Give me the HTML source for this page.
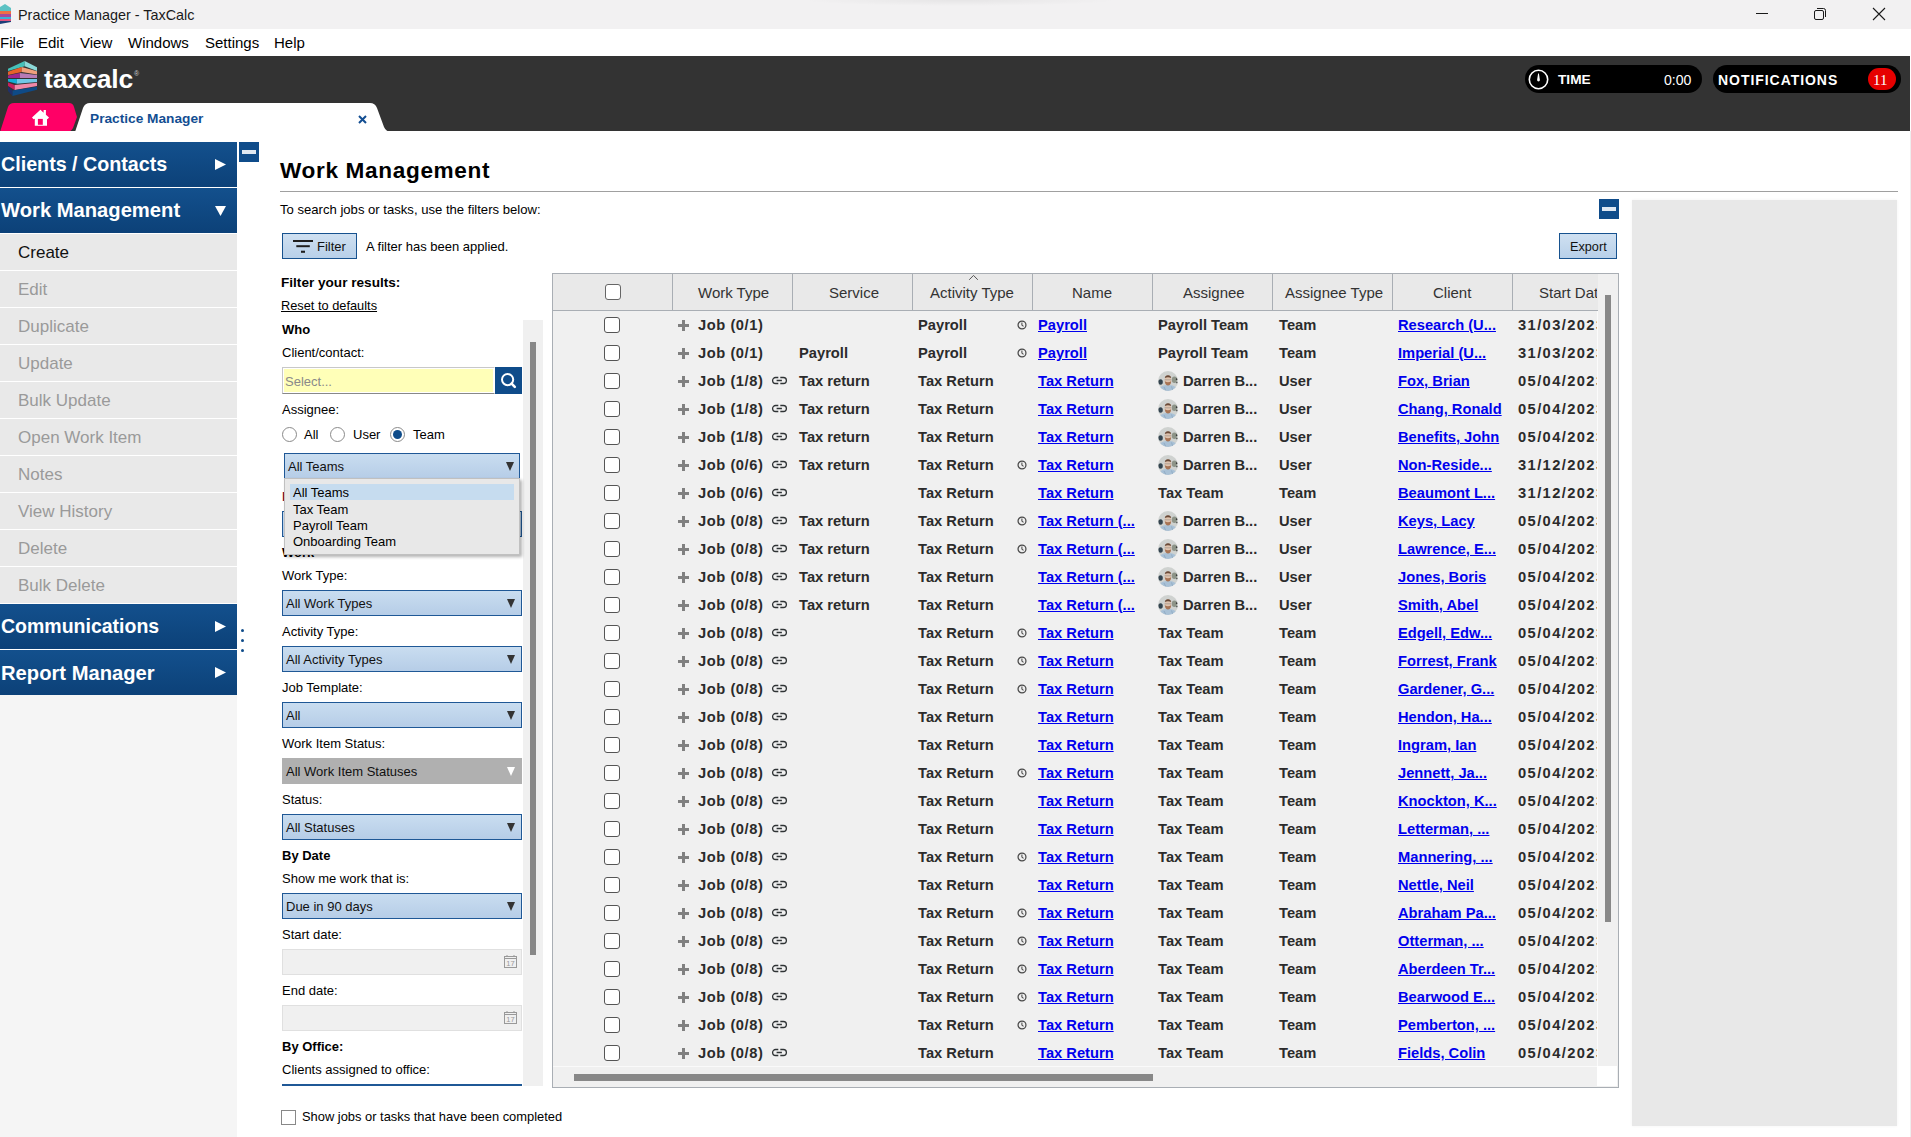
<!DOCTYPE html>
<html><head><meta charset="utf-8"><title>Practice Manager - TaxCalc</title>
<style>
html,body{margin:0;padding:0;width:1911px;height:1137px;overflow:hidden;background:#fff;position:relative}
.t{position:absolute;white-space:pre;line-height:1;font-family:"Liberation Sans",sans-serif}
.r{position:absolute}
</style></head><body>
<div class="r" style="left:0px;top:0px;width:1911px;height:29px;background:#f2f1f2"></div>
<div class="r" style="left:800px;top:0px;width:320px;height:6px;background:radial-gradient(ellipse at 50% 0%, rgba(0,0,0,0.05), rgba(0,0,0,0) 70%)"></div>
<svg class="r" style="left:0;top:4px" width="12" height="20" viewBox="0 0 12 20">
<polygon points="0,3 5,0 11,4 11,7 0,7" fill="#5cc2c4"/>
<rect x="0" y="7" width="11" height="3" fill="#ef7045"/>
<rect x="0" y="10" width="11" height="3" fill="#a8489a"/>
<rect x="0" y="13" width="11" height="2" fill="#39b1d9"/>
<rect x="0" y="15" width="11" height="2" fill="#e1557f"/>
<polygon points="0,17 11,17 11,18 0,20" fill="#1c3f78"/>
</svg>
<div class="t" style="left:18px;top:8px;font-size:14.4px;font-weight:normal;color:#1a1a1a;font-family:'Liberation Sans';">Practice Manager - TaxCalc</div>
<div class="r" style="left:1756px;top:13px;width:12px;height:1px;background:#1a1a1a"></div>
<svg class="r" style="left:1813px;top:7px" width="14" height="14" viewBox="0 0 14 14" fill="none" stroke="#1a1a1a" stroke-width="1">
<rect x="1.5" y="3.5" width="9" height="9" rx="1.5"/><path d="M4 1.5 H10.5 A2 2 0 0 1 12.5 3.5 V10"/></svg>
<svg class="r" style="left:1872px;top:7px" width="14" height="14" viewBox="0 0 14 14" stroke="#1a1a1a" stroke-width="1.1">
<path d="M1 1 L13 13 M13 1 L1 13"/></svg>
<div class="r" style="left:0px;top:29px;width:1911px;height:27px;background:#fff"></div>
<div class="t" style="left:0px;top:35px;font-size:15px;font-weight:normal;color:#000;font-family:'Liberation Sans';">File</div>
<div class="t" style="left:38px;top:35px;font-size:15px;font-weight:normal;color:#000;font-family:'Liberation Sans';">Edit</div>
<div class="t" style="left:80px;top:35px;font-size:15px;font-weight:normal;color:#000;font-family:'Liberation Sans';">View</div>
<div class="t" style="left:128px;top:35px;font-size:15px;font-weight:normal;color:#000;font-family:'Liberation Sans';">Windows</div>
<div class="t" style="left:205px;top:35px;font-size:15px;font-weight:normal;color:#000;font-family:'Liberation Sans';">Settings</div>
<div class="t" style="left:274px;top:35px;font-size:15px;font-weight:normal;color:#000;font-family:'Liberation Sans';">Help</div>
<div class="r" style="left:0px;top:56px;width:1910px;height:76px;background:#333333"></div>
<svg class="r" style="left:8px;top:60px" width="30" height="37" viewBox="0 0 30 37">
<polygon points="0,8.7 16.7,1 16.7,6.3 0,11.1" fill="#45c1b9"/>
<polygon points="16.7,1 29,7.2 29,10.9 16.7,6.3" fill="#8cd9d8"/>
<polygon points="0,11.8 13.7,7 13.7,12 0,15" fill="#e8612a"/>
<polygon points="13.7,7 29,11.3 29,14.6 13.7,12" fill="#f0a07c"/>
<polygon points="0,15.4 11.9,13 11.9,18 0,18.1" fill="#a0278e"/>
<polygon points="11.9,13 29,15 29,18.1 11.9,18" fill="#b87bb5"/>
<polygon points="0,19 8.9,18.9 8.9,23.8 0,21.6" fill="#12afd6"/>
<polygon points="8.9,18.9 29,19 29,22 8.9,23.8" fill="#72c8e6"/>
<polygon points="0,22.6 6.7,25.1 6.7,30.1 0,26" fill="#c8215c"/>
<polygon points="6.7,25.1 29,22.7 29,26 6.7,30.1" fill="#f089a8"/>
<polygon points="0,26.6 4.5,30.6 4.5,36 0,31" fill="#20306a"/>
<polygon points="4.5,30.6 29,26.8 29,29.8 4.5,36" fill="#0e4a86"/>
</svg>
<div class="t" style="left:44px;top:66px;font-size:26.5px;font-weight:bold;color:#fff;font-family:'Liberation Sans';letter-spacing:-0.1px">taxcalc</div>
<div class="t" style="left:134px;top:70px;font-size:7px;color:#ccc">&#174;</div>
<div class="r" style="left:1525px;top:65px;width:177px;height:28px;background:#000;border-radius:14px"></div>
<svg class="r" style="left:1528px;top:69px" width="21" height="21" viewBox="0 0 21 21">
<circle cx="10.5" cy="10.5" r="9.2" fill="none" stroke="#fff" stroke-width="1.6"/>
<path d="M10.1 4.5 L10.9 4.5 L11.9 11 A1.4 1.4 0 1 1 9.1 11 Z" fill="#fff"/></svg>
<div class="t" style="left:1558px;top:73px;font-size:13.7px;font-weight:bold;color:#fff;font-family:'Liberation Sans';">TIME</div>
<div class="t" style="left:1664px;top:73px;font-size:14.1px;font-weight:normal;color:#fff;font-family:'Liberation Sans';">0:00</div>
<div class="r" style="left:1713px;top:65px;width:188px;height:28px;background:#000;border-radius:14px"></div>
<div class="t" style="left:1718px;top:73px;font-size:14px;font-weight:bold;color:#fff;font-family:'Liberation Sans';letter-spacing:0.95px">NOTIFICATIONS</div>
<div class="r" style="left:1868px;top:68px;width:28px;height:22px;background:#e60000;border-radius:11px"></div>
<div class="t" style="left:1873px;top:73px;font-size:15px;font-weight:normal;color:#fff;font-family:'Liberation Serif';">11</div>
<svg class="r" style="left:0;top:103px" width="392" height="29" viewBox="0 0 392 29">
<path d="M0 29 L8 4 Q9.5 0 14 0 L69 0 Q73 0 74 4 L77 14 L73 25 Q71 29 66 29 Z" fill="#ff0066"/>
<path d="M75 29 L83 5 Q85 0 90 0 L370 0 Q375 0 377 5 L384 24 Q386 29 392 29 Z" fill="#fff"/>
</svg>
<svg class="r" style="left:28px;top:106px" width="26" height="24" viewBox="0 0 26 24">
<path d="M12.4 3.8 L15.6 6.7 V3.9 H17.9 V8.8 L21 11.6 L19.6 13.2 L19 12.7 V19.8 H6.8 V12.7 L5.5 13.3 L4 11.5 Z" fill="#fff"/>
<rect x="9.9" y="12.9" width="4.9" height="5.9" fill="#ff0066"/></svg>
<div class="t" style="left:90px;top:112px;font-size:13.7px;font-weight:bold;color:#134e92;font-family:'Liberation Sans';">Practice Manager</div>
<svg class="r" style="left:358px;top:115px" width="9" height="9" viewBox="0 0 9 9" stroke="#134e92" stroke-width="2">
<path d="M1 1 L8 8 M8 1 L1 8"/></svg>
<div class="r" style="left:0px;top:131px;width:1911px;height:1006px;background:#fff"></div>
<div class="r" style="left:0px;top:695px;width:237px;height:442px;background:#f5f5f5"></div>
<div class="r" style="left:1910px;top:131px;width:1px;height:1006px;background:#eeeeee"></div>
<div class="r" style="left:0px;top:142px;width:237px;height:45px;background:linear-gradient(#13508d,#0c4178)"></div>
<div class="t" style="left:1px;top:155px;font-size:19.7px;font-weight:bold;color:#fff;font-family:'Liberation Sans';">Clients / Contacts</div>
<svg class="r" style="left:215px;top:159px" width="11" height="11" viewBox="0 0 11 11"><path d="M0 0 L11 5.5 L0 11 Z" fill="#fff"/></svg>
<div class="r" style="left:0px;top:188px;width:237px;height:45px;background:linear-gradient(#13508d,#0c4178)"></div>
<div class="t" style="left:1px;top:200px;font-size:20.2px;font-weight:bold;color:#fff;font-family:'Liberation Sans';">Work Management</div>
<svg class="r" style="left:215px;top:206px" width="11" height="10" viewBox="0 0 11 10"><path d="M0 0 L11 0 L5.5 10 Z" fill="#fff"/></svg>
<div class="r" style="left:0px;top:234px;width:237px;height:36px;background:#e9e9e9"></div>
<div class="t" style="left:18px;top:244px;font-size:17px;font-weight:normal;color:#111;font-family:'Liberation Sans';">Create</div>
<div class="r" style="left:0px;top:271px;width:237px;height:36px;background:#e9e9e9"></div>
<div class="t" style="left:18px;top:281px;font-size:17px;font-weight:normal;color:#9a9a9a;font-family:'Liberation Sans';">Edit</div>
<div class="r" style="left:0px;top:308px;width:237px;height:36px;background:#e9e9e9"></div>
<div class="t" style="left:18px;top:318px;font-size:17px;font-weight:normal;color:#9a9a9a;font-family:'Liberation Sans';">Duplicate</div>
<div class="r" style="left:0px;top:345px;width:237px;height:36px;background:#e9e9e9"></div>
<div class="t" style="left:18px;top:355px;font-size:17px;font-weight:normal;color:#9a9a9a;font-family:'Liberation Sans';">Update</div>
<div class="r" style="left:0px;top:382px;width:237px;height:36px;background:#e9e9e9"></div>
<div class="t" style="left:18px;top:392px;font-size:17px;font-weight:normal;color:#9a9a9a;font-family:'Liberation Sans';">Bulk Update</div>
<div class="r" style="left:0px;top:419px;width:237px;height:36px;background:#e9e9e9"></div>
<div class="t" style="left:18px;top:429px;font-size:17px;font-weight:normal;color:#9a9a9a;font-family:'Liberation Sans';">Open Work Item</div>
<div class="r" style="left:0px;top:456px;width:237px;height:36px;background:#e9e9e9"></div>
<div class="t" style="left:18px;top:466px;font-size:17px;font-weight:normal;color:#9a9a9a;font-family:'Liberation Sans';">Notes</div>
<div class="r" style="left:0px;top:493px;width:237px;height:36px;background:#e9e9e9"></div>
<div class="t" style="left:18px;top:503px;font-size:17px;font-weight:normal;color:#9a9a9a;font-family:'Liberation Sans';">View History</div>
<div class="r" style="left:0px;top:530px;width:237px;height:36px;background:#e9e9e9"></div>
<div class="t" style="left:18px;top:540px;font-size:17px;font-weight:normal;color:#9a9a9a;font-family:'Liberation Sans';">Delete</div>
<div class="r" style="left:0px;top:567px;width:237px;height:36px;background:#e9e9e9"></div>
<div class="t" style="left:18px;top:577px;font-size:17px;font-weight:normal;color:#9a9a9a;font-family:'Liberation Sans';">Bulk Delete</div>
<div class="r" style="left:0px;top:604px;width:237px;height:45px;background:linear-gradient(#13508d,#0c4178)"></div>
<div class="t" style="left:1px;top:617px;font-size:19.5px;font-weight:bold;color:#fff;font-family:'Liberation Sans';">Communications</div>
<svg class="r" style="left:215px;top:621px" width="11" height="11" viewBox="0 0 11 11"><path d="M0 0 L11 5.5 L0 11 Z" fill="#fff"/></svg>
<div class="r" style="left:0px;top:650px;width:237px;height:45px;background:linear-gradient(#13508d,#0c4178)"></div>
<div class="t" style="left:1px;top:663px;font-size:20.2px;font-weight:bold;color:#fff;font-family:'Liberation Sans';">Report Manager</div>
<svg class="r" style="left:215px;top:667px" width="11" height="11" viewBox="0 0 11 11"><path d="M0 0 L11 5.5 L0 11 Z" fill="#fff"/></svg>
<div class="r" style="left:239px;top:142px;width:20px;height:20px;background:#0f4c8a"></div>
<div class="r" style="left:242px;top:150px;width:14px;height:4px;background:#dfe8f2"></div>
<div class="r" style="left:241px;top:629px;width:3px;height:3px;background:#0f4c8a;border-radius:50%"></div>
<div class="r" style="left:241px;top:639px;width:3px;height:3px;background:#0f4c8a;border-radius:50%"></div>
<div class="r" style="left:241px;top:649px;width:3px;height:3px;background:#0f4c8a;border-radius:50%"></div>
<div class="t" style="left:280px;top:160px;font-size:22.6px;font-weight:bold;color:#000;font-family:'Liberation Sans';letter-spacing:0.65px">Work Management</div>
<div class="r" style="left:280px;top:191px;width:1618px;height:1px;background:#a0a0a0"></div>
<div class="t" style="left:280px;top:203px;font-size:13.1px;font-weight:normal;color:#000;font-family:'Liberation Sans';">To search jobs or tasks, use the filters below:</div>
<div class="r" style="left:1599px;top:199px;width:20px;height:20px;background:#0f4c8a"></div>
<div class="r" style="left:1602px;top:207px;width:14px;height:4px;background:#dfe8f2"></div>
<div class="r" style="left:1632px;top:200px;width:265px;height:926px;background:#e8e8e8;box-shadow:0 0 3px rgba(0,0,0,0.05)"></div>
<div class="r" style="left:282px;top:233px;width:75px;height:26px;background:linear-gradient(#cfe0f1,#b8d0e9);border:1px solid #17528f;box-sizing:border-box"></div>
<svg class="r" style="left:293px;top:240px" width="21" height="14" viewBox="0 0 21 14" fill="#1e1e1e">
<rect x="0" y="0" width="20" height="2"/><rect x="3.3" y="5.2" width="13.5" height="2"/><rect x="8" y="10.7" width="4" height="2.1"/></svg>
<div class="t" style="left:317px;top:240px;font-size:13px;font-weight:normal;color:#111;font-family:'Liberation Sans';">Filter</div>
<div class="t" style="left:366px;top:240px;font-size:13px;font-weight:normal;color:#000;font-family:'Liberation Sans';">A filter has been applied.</div>
<div class="r" style="left:1559px;top:233px;width:58px;height:26px;background:linear-gradient(#cfe0f1,#b8d0e9);border:1px solid #17528f;box-sizing:border-box"></div>
<div class="t" style="left:1570px;top:241px;font-size:12.7px;font-weight:normal;color:#111;font-family:'Liberation Sans';">Export</div>
<div class="t" style="left:281px;top:276px;font-size:13.6px;font-weight:bold;color:#000;font-family:'Liberation Sans';">Filter your results:</div>
<div class="t" style="left:281px;top:300px;font-size:12.8px;font-weight:normal;color:#000;font-family:'Liberation Sans';text-decoration:underline">Reset to defaults</div>
<div class="r" style="left:523px;top:320px;width:20px;height:766px;background:#f0f0f0"></div>
<div class="r" style="left:530px;top:342px;width:6px;height:613px;background:#888"></div>
<div class="t" style="left:282px;top:323px;font-size:13px;font-weight:bold;color:#000;font-family:'Liberation Sans';">Who</div>
<div class="t" style="left:282px;top:346px;font-size:13px;font-weight:normal;color:#000;font-family:'Liberation Sans';">Client/contact:</div>
<div class="r" style="left:282px;top:367px;width:213px;height:27px;background:#ffffb8;border:1px solid #c8c8c8;border-bottom-color:#888;border-right-color:#fff;box-shadow:inset 0 0 0 1px #fff;box-sizing:border-box"></div>
<div class="t" style="left:285px;top:375px;font-size:13px;font-weight:normal;color:#8a8a8a;font-family:'Liberation Sans';">Select...</div>
<div class="r" style="left:495px;top:367px;width:27px;height:27px;background:#0f4c8a"></div>
<svg class="r" style="left:499px;top:371px" width="19" height="19" viewBox="0 0 19 19" fill="none" stroke="#fff" stroke-width="2">
<circle cx="8.6" cy="8.6" r="5.6"/><path d="M12.6 12.6 L15.8 15.8" stroke-width="2.6" stroke-linecap="round"/></svg>
<div class="t" style="left:282px;top:403px;font-size:13px;font-weight:normal;color:#000;font-family:'Liberation Sans';">Assignee:</div>
<div class="r" style="left:282px;top:427px;width:15px;height:15px;background:#fff;border:1px solid #8a8a8a;border-radius:50%;box-sizing:border-box"></div>
<div class="t" style="left:304px;top:428px;font-size:13px;font-weight:normal;color:#000;font-family:'Liberation Sans';">All</div>
<div class="r" style="left:330px;top:427px;width:15px;height:15px;background:#fff;border:1px solid #8a8a8a;border-radius:50%;box-sizing:border-box"></div>
<div class="t" style="left:353px;top:428px;font-size:13px;font-weight:normal;color:#000;font-family:'Liberation Sans';">User</div>
<div class="r" style="left:390px;top:427px;width:15px;height:15px;background:#fff;border:1px solid #8a8a8a;border-radius:50%;box-sizing:border-box"></div>
<div class="r" style="left:393px;top:430px;width:9px;height:9px;background:#0f4c8a;border-radius:50%"></div>
<div class="t" style="left:413px;top:428px;font-size:13px;font-weight:normal;color:#000;font-family:'Liberation Sans';">Team</div>
<div class="r" style="left:282px;top:511px;width:240px;height:26px;background:linear-gradient(#c9ddf0,#b6cde7);border:1px solid #1f5896;box-sizing:border-box"></div>
<div class="t" style="left:282px;top:490px;font-size:13px;font-weight:bold;color:#7a1030;font-family:'Liberation Sans';">I</div>
<div class="t" style="left:282px;top:546px;font-size:13px;font-weight:bold;color:#000;font-family:'Liberation Sans';">Work</div>
<div class="r" style="left:284px;top:453px;width:236px;height:26px;background:linear-gradient(#c9ddf0,#b6cde7);border:1px solid #1f5896;box-sizing:border-box"></div>
<div class="t" style="left:288px;top:460px;font-size:13px;font-weight:normal;color:#111;font-family:'Liberation Sans';">All Teams</div>
<svg class="r" style="left:506px;top:462px" width="8" height="9" viewBox="0 0 8 9"><path d="M0 0 L8 0 L4 9 Z" fill="#333"/></svg>
<div class="r" style="left:284px;top:478px;width:236px;height:77px;background:#e8e8e8;border:1px solid #c0c0c0;box-sizing:border-box;box-shadow:2px 2px 3px rgba(0,0,0,0.3)"></div>
<div class="r" style="left:290px;top:484px;width:224px;height:16px;background:#c6dcef"></div>
<div class="t" style="left:293px;top:486px;font-size:13px;font-weight:normal;color:#000;font-family:'Liberation Sans';">All Teams</div>
<div class="t" style="left:293px;top:503px;font-size:13px;font-weight:normal;color:#000;font-family:'Liberation Sans';">Tax Team</div>
<div class="t" style="left:293px;top:519px;font-size:13px;font-weight:normal;color:#000;font-family:'Liberation Sans';">Payroll Team</div>
<div class="t" style="left:293px;top:535px;font-size:13px;font-weight:normal;color:#000;font-family:'Liberation Sans';">Onboarding Team</div>
<div class="t" style="left:282px;top:569px;font-size:13px;font-weight:normal;color:#000;font-family:'Liberation Sans';">Work Type:</div>
<div class="r" style="left:282px;top:590px;width:240px;height:26px;background:linear-gradient(#c9ddf0,#b6cde7);border:1px solid #1f5896;box-sizing:border-box"></div>
<div class="t" style="left:286px;top:597px;font-size:13px;font-weight:normal;color:#111;font-family:'Liberation Sans';">All Work Types</div>
<svg class="r" style="left:507px;top:599px" width="8" height="9" viewBox="0 0 8 9"><path d="M0 0 L8 0 L4 9 Z" fill="#333"/></svg>
<div class="t" style="left:282px;top:625px;font-size:13px;font-weight:normal;color:#000;font-family:'Liberation Sans';">Activity Type:</div>
<div class="r" style="left:282px;top:646px;width:240px;height:26px;background:linear-gradient(#c9ddf0,#b6cde7);border:1px solid #1f5896;box-sizing:border-box"></div>
<div class="t" style="left:286px;top:653px;font-size:13px;font-weight:normal;color:#111;font-family:'Liberation Sans';">All Activity Types</div>
<svg class="r" style="left:507px;top:655px" width="8" height="9" viewBox="0 0 8 9"><path d="M0 0 L8 0 L4 9 Z" fill="#333"/></svg>
<div class="t" style="left:282px;top:681px;font-size:13px;font-weight:normal;color:#000;font-family:'Liberation Sans';">Job Template:</div>
<div class="r" style="left:282px;top:702px;width:240px;height:26px;background:linear-gradient(#c9ddf0,#b6cde7);border:1px solid #1f5896;box-sizing:border-box"></div>
<div class="t" style="left:286px;top:709px;font-size:13px;font-weight:normal;color:#111;font-family:'Liberation Sans';">All</div>
<svg class="r" style="left:507px;top:711px" width="8" height="9" viewBox="0 0 8 9"><path d="M0 0 L8 0 L4 9 Z" fill="#333"/></svg>
<div class="t" style="left:282px;top:737px;font-size:13px;font-weight:normal;color:#000;font-family:'Liberation Sans';">Work Item Status:</div>
<div class="r" style="left:282px;top:758px;width:240px;height:26px;background:#b0b0b0"></div>
<div class="t" style="left:286px;top:765px;font-size:13px;font-weight:normal;color:#111;font-family:'Liberation Sans';">All Work Item Statuses</div>
<svg class="r" style="left:507px;top:767px" width="8" height="9" viewBox="0 0 8 9"><path d="M0 0 L8 0 L4 9 Z" fill="#fff"/></svg>
<div class="t" style="left:282px;top:793px;font-size:13px;font-weight:normal;color:#000;font-family:'Liberation Sans';">Status:</div>
<div class="r" style="left:282px;top:814px;width:240px;height:26px;background:linear-gradient(#c9ddf0,#b6cde7);border:1px solid #1f5896;box-sizing:border-box"></div>
<div class="t" style="left:286px;top:821px;font-size:13px;font-weight:normal;color:#111;font-family:'Liberation Sans';">All Statuses</div>
<svg class="r" style="left:507px;top:823px" width="8" height="9" viewBox="0 0 8 9"><path d="M0 0 L8 0 L4 9 Z" fill="#333"/></svg>
<div class="t" style="left:282px;top:849px;font-size:13px;font-weight:bold;color:#000;font-family:'Liberation Sans';">By Date</div>
<div class="t" style="left:282px;top:872px;font-size:13px;font-weight:normal;color:#000;font-family:'Liberation Sans';">Show me work that is:</div>
<div class="r" style="left:282px;top:893px;width:240px;height:26px;background:linear-gradient(#c9ddf0,#b6cde7);border:1px solid #1f5896;box-sizing:border-box"></div>
<div class="t" style="left:286px;top:900px;font-size:13px;font-weight:normal;color:#111;font-family:'Liberation Sans';">Due in 90 days</div>
<svg class="r" style="left:507px;top:902px" width="8" height="9" viewBox="0 0 8 9"><path d="M0 0 L8 0 L4 9 Z" fill="#333"/></svg>
<div class="t" style="left:282px;top:928px;font-size:13px;font-weight:normal;color:#000;font-family:'Liberation Sans';">Start date:</div>
<div class="r" style="left:282px;top:949px;width:240px;height:26px;background:#f0f0f0;border:1px solid #e0e0e0;box-sizing:border-box"></div>
<svg class="r" style="left:503px;top:954px" width="15" height="15" viewBox="0 0 15 15" fill="none" stroke="#999" stroke-width="1">
<rect x="1.5" y="2.5" width="12" height="11"/><path d="M1.5 4.5 H13.5"/><path d="M4 1 V3 M11 1 V3"/>
<text x="7.5" y="12.3" font-size="7.5" font-family="Liberation Sans" fill="#999" stroke="none" text-anchor="middle">17</text></svg>
<div class="t" style="left:282px;top:984px;font-size:13px;font-weight:normal;color:#000;font-family:'Liberation Sans';">End date:</div>
<div class="r" style="left:282px;top:1005px;width:240px;height:26px;background:#f0f0f0;border:1px solid #e0e0e0;box-sizing:border-box"></div>
<svg class="r" style="left:503px;top:1010px" width="15" height="15" viewBox="0 0 15 15" fill="none" stroke="#999" stroke-width="1">
<rect x="1.5" y="2.5" width="12" height="11"/><path d="M1.5 4.5 H13.5"/><path d="M4 1 V3 M11 1 V3"/>
<text x="7.5" y="12.3" font-size="7.5" font-family="Liberation Sans" fill="#999" stroke="none" text-anchor="middle">17</text></svg>
<div class="t" style="left:282px;top:1040px;font-size:13px;font-weight:bold;color:#000;font-family:'Liberation Sans';">By Office:</div>
<div class="t" style="left:282px;top:1063px;font-size:13px;font-weight:normal;color:#000;font-family:'Liberation Sans';">Clients assigned to office:</div>
<div class="r" style="left:282px;top:1084px;width:240px;height:2px;background:#1f5896"></div>
<div class="r" style="left:281px;top:1110px;width:15px;height:15px;background:#fff;border:1px solid #888;box-sizing:border-box"></div>
<div class="t" style="left:302px;top:1111px;font-size:12.9px;font-weight:normal;color:#000;font-family:'Liberation Sans';">Show jobs or tasks that have been completed</div>
<div class="r" style="left:552px;top:273px;width:1067px;height:815px;background:#f0f0f0;border:1px solid #a9aeb4;box-sizing:border-box"></div>
<div class="r" style="left:553px;top:274px;width:1045px;height:37px;background:#e9e9e9"></div>
<div class="r" style="left:553px;top:310px;width:1045px;height:1px;background:#a9aeb4"></div>
<div class="r" style="left:672px;top:274px;width:1px;height:36px;background:#a9aeb4"></div>
<div class="r" style="left:792px;top:274px;width:1px;height:36px;background:#a9aeb4"></div>
<div class="r" style="left:912px;top:274px;width:1px;height:36px;background:#a9aeb4"></div>
<div class="r" style="left:1032px;top:274px;width:1px;height:36px;background:#a9aeb4"></div>
<div class="r" style="left:1152px;top:274px;width:1px;height:36px;background:#a9aeb4"></div>
<div class="r" style="left:1272px;top:274px;width:1px;height:36px;background:#a9aeb4"></div>
<div class="r" style="left:1392px;top:274px;width:1px;height:36px;background:#a9aeb4"></div>
<div class="r" style="left:1512px;top:274px;width:1px;height:36px;background:#a9aeb4"></div>
<div class="r" style="left:605px;top:284px;width:16px;height:16px;background:#fff;border:1px solid #666;border-radius:3px;box-sizing:border-box"></div>
<div class="r" style="left:553px;top:274px;width:1044px;height:36px;overflow:hidden">
<div class="t" style="left:145px;top:11px;font-size:15px;color:#333">Work Type</div>
<div class="t" style="left:276px;top:11px;font-size:15px;color:#333">Service</div>
<div class="t" style="left:377px;top:11px;font-size:15px;color:#333">Activity Type</div>
<div class="t" style="left:519px;top:11px;font-size:15px;color:#333">Name</div>
<div class="t" style="left:630px;top:11px;font-size:15px;color:#333">Assignee</div>
<div class="t" style="left:732px;top:11px;font-size:15px;color:#333">Assignee Type</div>
<div class="t" style="left:880px;top:11px;font-size:15px;color:#333">Client</div>
<div class="t" style="left:986px;top:11px;font-size:15px;color:#333">Start Date</div>
</div>
<svg class="r" style="left:968px;top:274px" width="12" height="7" viewBox="0 0 12 7" fill="none" stroke="#555" stroke-width="1"><path d="M1.2 5.8 L5.5 1.4 L9.8 5.8"/></svg>
<div class="r" style="left:1605px;top:295px;width:6px;height:627px;background:#888"></div>
<div class="r" style="left:553px;top:1066px;width:1044px;height:1px;background:#fafafa"></div>
<div class="r" style="left:574px;top:1074px;width:579px;height:7px;background:#888"></div>
<div class="r" style="left:1597px;top:1066px;width:20px;height:20px;background:#fff"></div>
<div class="r" style="left:1597px;top:311px;width:1px;height:755px;background:#fbfbfb"></div>
<div class="r" style="left:553px;top:311px;width:1044px;height:755px;overflow:hidden">
<div class="r" style="left:51px;top:6px;width:16px;height:16px;background:#fff;border:1px solid #555;border-radius:3px;box-sizing:border-box"></div>
<div class="r" style="left:125px;top:13px;width:11px;height:3px;background:#808080"></div>
<div class="r" style="left:129px;top:9px;width:3px;height:11px;background:#808080"></div>
<div class="t" style="left:145px;top:7px;font-size:14.7px;font-weight:bold;color:#2b2b2b;letter-spacing:0.55px">Job (0/1)</div>
<div class="t" style="left:365px;top:7px;font-size:14.7px;font-weight:bold;color:#2b2b2b;">Payroll</div>
<svg class="r" style="left:464px;top:9px" width="10" height="10" viewBox="0 0 10 10" fill="none" stroke="#484848" stroke-width="1.25">
<circle cx="5" cy="5" r="3.95"/><path d="M4.9 2.4 V5.1 L6.5 6.4" stroke-width="1.05"/></svg>
<div class="t" style="left:485px;top:7px;font-size:14.7px;font-weight:bold;color:#0000ee;text-decoration:underline">Payroll</div>
<div class="t" style="left:605px;top:7px;font-size:14.7px;font-weight:bold;color:#2b2b2b;">Payroll Team</div>
<div class="t" style="left:726px;top:7px;font-size:14.7px;font-weight:bold;color:#2b2b2b;">Team</div>
<div class="t" style="left:845px;top:7px;font-size:14.7px;font-weight:bold;color:#0000ee;text-decoration:underline">Research (U...</div>
<div class="t" style="left:965px;top:7px;font-size:14.7px;font-weight:bold;color:#2b2b2b;letter-spacing:1.4px">31/03/2023</div>
<div class="r" style="left:51px;top:34px;width:16px;height:16px;background:#fff;border:1px solid #555;border-radius:3px;box-sizing:border-box"></div>
<div class="r" style="left:125px;top:41px;width:11px;height:3px;background:#808080"></div>
<div class="r" style="left:129px;top:37px;width:3px;height:11px;background:#808080"></div>
<div class="t" style="left:145px;top:35px;font-size:14.7px;font-weight:bold;color:#2b2b2b;letter-spacing:0.55px">Job (0/1)</div>
<div class="t" style="left:246px;top:35px;font-size:14.7px;font-weight:bold;color:#2b2b2b;">Payroll</div>
<div class="t" style="left:365px;top:35px;font-size:14.7px;font-weight:bold;color:#2b2b2b;">Payroll</div>
<svg class="r" style="left:464px;top:37px" width="10" height="10" viewBox="0 0 10 10" fill="none" stroke="#484848" stroke-width="1.25">
<circle cx="5" cy="5" r="3.95"/><path d="M4.9 2.4 V5.1 L6.5 6.4" stroke-width="1.05"/></svg>
<div class="t" style="left:485px;top:35px;font-size:14.7px;font-weight:bold;color:#0000ee;text-decoration:underline">Payroll</div>
<div class="t" style="left:605px;top:35px;font-size:14.7px;font-weight:bold;color:#2b2b2b;">Payroll Team</div>
<div class="t" style="left:726px;top:35px;font-size:14.7px;font-weight:bold;color:#2b2b2b;">Team</div>
<div class="t" style="left:845px;top:35px;font-size:14.7px;font-weight:bold;color:#0000ee;text-decoration:underline">Imperial (U...</div>
<div class="t" style="left:965px;top:35px;font-size:14.7px;font-weight:bold;color:#2b2b2b;letter-spacing:1.4px">31/03/2023</div>
<div class="r" style="left:51px;top:62px;width:16px;height:16px;background:#fff;border:1px solid #555;border-radius:3px;box-sizing:border-box"></div>
<div class="r" style="left:125px;top:69px;width:11px;height:3px;background:#808080"></div>
<div class="r" style="left:129px;top:65px;width:3px;height:11px;background:#808080"></div>
<div class="t" style="left:145px;top:63px;font-size:14.7px;font-weight:bold;color:#2b2b2b;letter-spacing:0.55px">Job (1/8)</div>
<svg class="r" style="left:218px;top:65px" width="17" height="9" viewBox="0 0 17 9" fill="none" stroke="#2f3335" stroke-width="1.3">
<path d="M7.3 1.5 H4.6 A3 3 0 0 0 4.6 7.5 H7.3 M9.3 1.5 H12.4 A3 3 0 0 1 12.4 7.5 H9.3 M5.6 4.5 H10.9"/></svg>
<div class="t" style="left:246px;top:63px;font-size:14.7px;font-weight:bold;color:#2b2b2b;">Tax return</div>
<div class="t" style="left:365px;top:63px;font-size:14.7px;font-weight:bold;color:#2b2b2b;">Tax Return</div>
<div class="t" style="left:485px;top:63px;font-size:14.7px;font-weight:bold;color:#0000ee;text-decoration:underline">Tax Return</div>
<svg class="r" style="left:605px;top:60px" width="20" height="20" viewBox="0 0 20 20">
<defs><clipPath id="c2"><circle cx="10" cy="10" r="10"/></clipPath></defs>
<g clip-path="url(#c2)"><rect width="20" height="20" fill="#cfd2d0"/>
<ellipse cx="2.6" cy="11" rx="2.2" ry="2.8" fill="#34444f"/>
<ellipse cx="16.4" cy="8.8" rx="2.6" ry="3.2" fill="#8d9488"/>
<circle cx="18.7" cy="8.2" r="0.9" fill="#3a3a3a"/><circle cx="18.9" cy="11.6" r="0.8" fill="#444"/>
<path d="M1 20 L2.5 16 Q6 13.6 10 14 Q14.5 13.6 17.5 16 L20 20 Z" fill="#a9c1d6"/>
<path d="M6 16 L8 20 M13.5 15.5 L15 20" stroke="#86a3bd" stroke-width="0.7"/>
<ellipse cx="10" cy="9.3" rx="3.4" ry="4.7" fill="#dfc3ae"/>
<path d="M6.8 10.2 Q7.4 14.5 10 14.6 Q12.7 14.5 13.2 10.2 Q10 12.2 6.8 10.2 Z" fill="#a87556"/>
<path d="M6.8 7 Q7.2 4.1 10 4.2 Q12.8 4.1 13.2 7 Q10 5.5 6.8 7 Z" fill="#6a4a38"/>
<path d="M6.6 8.8 H13.4" stroke="#7a7a7a" stroke-width="0.45"/>
</g></svg>
<div class="t" style="left:630px;top:63px;font-size:14.7px;font-weight:bold;color:#2b2b2b;">Darren B...</div>
<div class="t" style="left:726px;top:63px;font-size:14.7px;font-weight:bold;color:#2b2b2b;">User</div>
<div class="t" style="left:845px;top:63px;font-size:14.7px;font-weight:bold;color:#0000ee;text-decoration:underline">Fox, Brian</div>
<div class="t" style="left:965px;top:63px;font-size:14.7px;font-weight:bold;color:#2b2b2b;letter-spacing:1.4px">05/04/2023</div>
<div class="r" style="left:51px;top:90px;width:16px;height:16px;background:#fff;border:1px solid #555;border-radius:3px;box-sizing:border-box"></div>
<div class="r" style="left:125px;top:97px;width:11px;height:3px;background:#808080"></div>
<div class="r" style="left:129px;top:93px;width:3px;height:11px;background:#808080"></div>
<div class="t" style="left:145px;top:91px;font-size:14.7px;font-weight:bold;color:#2b2b2b;letter-spacing:0.55px">Job (1/8)</div>
<svg class="r" style="left:218px;top:93px" width="17" height="9" viewBox="0 0 17 9" fill="none" stroke="#2f3335" stroke-width="1.3">
<path d="M7.3 1.5 H4.6 A3 3 0 0 0 4.6 7.5 H7.3 M9.3 1.5 H12.4 A3 3 0 0 1 12.4 7.5 H9.3 M5.6 4.5 H10.9"/></svg>
<div class="t" style="left:246px;top:91px;font-size:14.7px;font-weight:bold;color:#2b2b2b;">Tax return</div>
<div class="t" style="left:365px;top:91px;font-size:14.7px;font-weight:bold;color:#2b2b2b;">Tax Return</div>
<div class="t" style="left:485px;top:91px;font-size:14.7px;font-weight:bold;color:#0000ee;text-decoration:underline">Tax Return</div>
<svg class="r" style="left:605px;top:88px" width="20" height="20" viewBox="0 0 20 20">
<defs><clipPath id="c3"><circle cx="10" cy="10" r="10"/></clipPath></defs>
<g clip-path="url(#c3)"><rect width="20" height="20" fill="#cfd2d0"/>
<ellipse cx="2.6" cy="11" rx="2.2" ry="2.8" fill="#34444f"/>
<ellipse cx="16.4" cy="8.8" rx="2.6" ry="3.2" fill="#8d9488"/>
<circle cx="18.7" cy="8.2" r="0.9" fill="#3a3a3a"/><circle cx="18.9" cy="11.6" r="0.8" fill="#444"/>
<path d="M1 20 L2.5 16 Q6 13.6 10 14 Q14.5 13.6 17.5 16 L20 20 Z" fill="#a9c1d6"/>
<path d="M6 16 L8 20 M13.5 15.5 L15 20" stroke="#86a3bd" stroke-width="0.7"/>
<ellipse cx="10" cy="9.3" rx="3.4" ry="4.7" fill="#dfc3ae"/>
<path d="M6.8 10.2 Q7.4 14.5 10 14.6 Q12.7 14.5 13.2 10.2 Q10 12.2 6.8 10.2 Z" fill="#a87556"/>
<path d="M6.8 7 Q7.2 4.1 10 4.2 Q12.8 4.1 13.2 7 Q10 5.5 6.8 7 Z" fill="#6a4a38"/>
<path d="M6.6 8.8 H13.4" stroke="#7a7a7a" stroke-width="0.45"/>
</g></svg>
<div class="t" style="left:630px;top:91px;font-size:14.7px;font-weight:bold;color:#2b2b2b;">Darren B...</div>
<div class="t" style="left:726px;top:91px;font-size:14.7px;font-weight:bold;color:#2b2b2b;">User</div>
<div class="t" style="left:845px;top:91px;font-size:14.7px;font-weight:bold;color:#0000ee;text-decoration:underline">Chang, Ronald</div>
<div class="t" style="left:965px;top:91px;font-size:14.7px;font-weight:bold;color:#2b2b2b;letter-spacing:1.4px">05/04/2023</div>
<div class="r" style="left:51px;top:118px;width:16px;height:16px;background:#fff;border:1px solid #555;border-radius:3px;box-sizing:border-box"></div>
<div class="r" style="left:125px;top:125px;width:11px;height:3px;background:#808080"></div>
<div class="r" style="left:129px;top:121px;width:3px;height:11px;background:#808080"></div>
<div class="t" style="left:145px;top:119px;font-size:14.7px;font-weight:bold;color:#2b2b2b;letter-spacing:0.55px">Job (1/8)</div>
<svg class="r" style="left:218px;top:121px" width="17" height="9" viewBox="0 0 17 9" fill="none" stroke="#2f3335" stroke-width="1.3">
<path d="M7.3 1.5 H4.6 A3 3 0 0 0 4.6 7.5 H7.3 M9.3 1.5 H12.4 A3 3 0 0 1 12.4 7.5 H9.3 M5.6 4.5 H10.9"/></svg>
<div class="t" style="left:246px;top:119px;font-size:14.7px;font-weight:bold;color:#2b2b2b;">Tax return</div>
<div class="t" style="left:365px;top:119px;font-size:14.7px;font-weight:bold;color:#2b2b2b;">Tax Return</div>
<div class="t" style="left:485px;top:119px;font-size:14.7px;font-weight:bold;color:#0000ee;text-decoration:underline">Tax Return</div>
<svg class="r" style="left:605px;top:116px" width="20" height="20" viewBox="0 0 20 20">
<defs><clipPath id="c4"><circle cx="10" cy="10" r="10"/></clipPath></defs>
<g clip-path="url(#c4)"><rect width="20" height="20" fill="#cfd2d0"/>
<ellipse cx="2.6" cy="11" rx="2.2" ry="2.8" fill="#34444f"/>
<ellipse cx="16.4" cy="8.8" rx="2.6" ry="3.2" fill="#8d9488"/>
<circle cx="18.7" cy="8.2" r="0.9" fill="#3a3a3a"/><circle cx="18.9" cy="11.6" r="0.8" fill="#444"/>
<path d="M1 20 L2.5 16 Q6 13.6 10 14 Q14.5 13.6 17.5 16 L20 20 Z" fill="#a9c1d6"/>
<path d="M6 16 L8 20 M13.5 15.5 L15 20" stroke="#86a3bd" stroke-width="0.7"/>
<ellipse cx="10" cy="9.3" rx="3.4" ry="4.7" fill="#dfc3ae"/>
<path d="M6.8 10.2 Q7.4 14.5 10 14.6 Q12.7 14.5 13.2 10.2 Q10 12.2 6.8 10.2 Z" fill="#a87556"/>
<path d="M6.8 7 Q7.2 4.1 10 4.2 Q12.8 4.1 13.2 7 Q10 5.5 6.8 7 Z" fill="#6a4a38"/>
<path d="M6.6 8.8 H13.4" stroke="#7a7a7a" stroke-width="0.45"/>
</g></svg>
<div class="t" style="left:630px;top:119px;font-size:14.7px;font-weight:bold;color:#2b2b2b;">Darren B...</div>
<div class="t" style="left:726px;top:119px;font-size:14.7px;font-weight:bold;color:#2b2b2b;">User</div>
<div class="t" style="left:845px;top:119px;font-size:14.7px;font-weight:bold;color:#0000ee;text-decoration:underline">Benefits, John</div>
<div class="t" style="left:965px;top:119px;font-size:14.7px;font-weight:bold;color:#2b2b2b;letter-spacing:1.4px">05/04/2023</div>
<div class="r" style="left:51px;top:146px;width:16px;height:16px;background:#fff;border:1px solid #555;border-radius:3px;box-sizing:border-box"></div>
<div class="r" style="left:125px;top:153px;width:11px;height:3px;background:#808080"></div>
<div class="r" style="left:129px;top:149px;width:3px;height:11px;background:#808080"></div>
<div class="t" style="left:145px;top:147px;font-size:14.7px;font-weight:bold;color:#2b2b2b;letter-spacing:0.55px">Job (0/6)</div>
<svg class="r" style="left:218px;top:149px" width="17" height="9" viewBox="0 0 17 9" fill="none" stroke="#2f3335" stroke-width="1.3">
<path d="M7.3 1.5 H4.6 A3 3 0 0 0 4.6 7.5 H7.3 M9.3 1.5 H12.4 A3 3 0 0 1 12.4 7.5 H9.3 M5.6 4.5 H10.9"/></svg>
<div class="t" style="left:246px;top:147px;font-size:14.7px;font-weight:bold;color:#2b2b2b;">Tax return</div>
<div class="t" style="left:365px;top:147px;font-size:14.7px;font-weight:bold;color:#2b2b2b;">Tax Return</div>
<svg class="r" style="left:464px;top:149px" width="10" height="10" viewBox="0 0 10 10" fill="none" stroke="#484848" stroke-width="1.25">
<circle cx="5" cy="5" r="3.95"/><path d="M4.9 2.4 V5.1 L6.5 6.4" stroke-width="1.05"/></svg>
<div class="t" style="left:485px;top:147px;font-size:14.7px;font-weight:bold;color:#0000ee;text-decoration:underline">Tax Return</div>
<svg class="r" style="left:605px;top:144px" width="20" height="20" viewBox="0 0 20 20">
<defs><clipPath id="c5"><circle cx="10" cy="10" r="10"/></clipPath></defs>
<g clip-path="url(#c5)"><rect width="20" height="20" fill="#cfd2d0"/>
<ellipse cx="2.6" cy="11" rx="2.2" ry="2.8" fill="#34444f"/>
<ellipse cx="16.4" cy="8.8" rx="2.6" ry="3.2" fill="#8d9488"/>
<circle cx="18.7" cy="8.2" r="0.9" fill="#3a3a3a"/><circle cx="18.9" cy="11.6" r="0.8" fill="#444"/>
<path d="M1 20 L2.5 16 Q6 13.6 10 14 Q14.5 13.6 17.5 16 L20 20 Z" fill="#a9c1d6"/>
<path d="M6 16 L8 20 M13.5 15.5 L15 20" stroke="#86a3bd" stroke-width="0.7"/>
<ellipse cx="10" cy="9.3" rx="3.4" ry="4.7" fill="#dfc3ae"/>
<path d="M6.8 10.2 Q7.4 14.5 10 14.6 Q12.7 14.5 13.2 10.2 Q10 12.2 6.8 10.2 Z" fill="#a87556"/>
<path d="M6.8 7 Q7.2 4.1 10 4.2 Q12.8 4.1 13.2 7 Q10 5.5 6.8 7 Z" fill="#6a4a38"/>
<path d="M6.6 8.8 H13.4" stroke="#7a7a7a" stroke-width="0.45"/>
</g></svg>
<div class="t" style="left:630px;top:147px;font-size:14.7px;font-weight:bold;color:#2b2b2b;">Darren B...</div>
<div class="t" style="left:726px;top:147px;font-size:14.7px;font-weight:bold;color:#2b2b2b;">User</div>
<div class="t" style="left:845px;top:147px;font-size:14.7px;font-weight:bold;color:#0000ee;text-decoration:underline">Non-Reside...</div>
<div class="t" style="left:965px;top:147px;font-size:14.7px;font-weight:bold;color:#2b2b2b;letter-spacing:1.4px">31/12/2023</div>
<div class="r" style="left:51px;top:174px;width:16px;height:16px;background:#fff;border:1px solid #555;border-radius:3px;box-sizing:border-box"></div>
<div class="r" style="left:125px;top:181px;width:11px;height:3px;background:#808080"></div>
<div class="r" style="left:129px;top:177px;width:3px;height:11px;background:#808080"></div>
<div class="t" style="left:145px;top:175px;font-size:14.7px;font-weight:bold;color:#2b2b2b;letter-spacing:0.55px">Job (0/6)</div>
<svg class="r" style="left:218px;top:177px" width="17" height="9" viewBox="0 0 17 9" fill="none" stroke="#2f3335" stroke-width="1.3">
<path d="M7.3 1.5 H4.6 A3 3 0 0 0 4.6 7.5 H7.3 M9.3 1.5 H12.4 A3 3 0 0 1 12.4 7.5 H9.3 M5.6 4.5 H10.9"/></svg>
<div class="t" style="left:365px;top:175px;font-size:14.7px;font-weight:bold;color:#2b2b2b;">Tax Return</div>
<div class="t" style="left:485px;top:175px;font-size:14.7px;font-weight:bold;color:#0000ee;text-decoration:underline">Tax Return</div>
<div class="t" style="left:605px;top:175px;font-size:14.7px;font-weight:bold;color:#2b2b2b;">Tax Team</div>
<div class="t" style="left:726px;top:175px;font-size:14.7px;font-weight:bold;color:#2b2b2b;">Team</div>
<div class="t" style="left:845px;top:175px;font-size:14.7px;font-weight:bold;color:#0000ee;text-decoration:underline">Beaumont L...</div>
<div class="t" style="left:965px;top:175px;font-size:14.7px;font-weight:bold;color:#2b2b2b;letter-spacing:1.4px">31/12/2023</div>
<div class="r" style="left:51px;top:202px;width:16px;height:16px;background:#fff;border:1px solid #555;border-radius:3px;box-sizing:border-box"></div>
<div class="r" style="left:125px;top:209px;width:11px;height:3px;background:#808080"></div>
<div class="r" style="left:129px;top:205px;width:3px;height:11px;background:#808080"></div>
<div class="t" style="left:145px;top:203px;font-size:14.7px;font-weight:bold;color:#2b2b2b;letter-spacing:0.55px">Job (0/8)</div>
<svg class="r" style="left:218px;top:205px" width="17" height="9" viewBox="0 0 17 9" fill="none" stroke="#2f3335" stroke-width="1.3">
<path d="M7.3 1.5 H4.6 A3 3 0 0 0 4.6 7.5 H7.3 M9.3 1.5 H12.4 A3 3 0 0 1 12.4 7.5 H9.3 M5.6 4.5 H10.9"/></svg>
<div class="t" style="left:246px;top:203px;font-size:14.7px;font-weight:bold;color:#2b2b2b;">Tax return</div>
<div class="t" style="left:365px;top:203px;font-size:14.7px;font-weight:bold;color:#2b2b2b;">Tax Return</div>
<svg class="r" style="left:464px;top:205px" width="10" height="10" viewBox="0 0 10 10" fill="none" stroke="#484848" stroke-width="1.25">
<circle cx="5" cy="5" r="3.95"/><path d="M4.9 2.4 V5.1 L6.5 6.4" stroke-width="1.05"/></svg>
<div class="t" style="left:485px;top:203px;font-size:14.7px;font-weight:bold;color:#0000ee;text-decoration:underline">Tax Return (...</div>
<svg class="r" style="left:605px;top:200px" width="20" height="20" viewBox="0 0 20 20">
<defs><clipPath id="c7"><circle cx="10" cy="10" r="10"/></clipPath></defs>
<g clip-path="url(#c7)"><rect width="20" height="20" fill="#cfd2d0"/>
<ellipse cx="2.6" cy="11" rx="2.2" ry="2.8" fill="#34444f"/>
<ellipse cx="16.4" cy="8.8" rx="2.6" ry="3.2" fill="#8d9488"/>
<circle cx="18.7" cy="8.2" r="0.9" fill="#3a3a3a"/><circle cx="18.9" cy="11.6" r="0.8" fill="#444"/>
<path d="M1 20 L2.5 16 Q6 13.6 10 14 Q14.5 13.6 17.5 16 L20 20 Z" fill="#a9c1d6"/>
<path d="M6 16 L8 20 M13.5 15.5 L15 20" stroke="#86a3bd" stroke-width="0.7"/>
<ellipse cx="10" cy="9.3" rx="3.4" ry="4.7" fill="#dfc3ae"/>
<path d="M6.8 10.2 Q7.4 14.5 10 14.6 Q12.7 14.5 13.2 10.2 Q10 12.2 6.8 10.2 Z" fill="#a87556"/>
<path d="M6.8 7 Q7.2 4.1 10 4.2 Q12.8 4.1 13.2 7 Q10 5.5 6.8 7 Z" fill="#6a4a38"/>
<path d="M6.6 8.8 H13.4" stroke="#7a7a7a" stroke-width="0.45"/>
</g></svg>
<div class="t" style="left:630px;top:203px;font-size:14.7px;font-weight:bold;color:#2b2b2b;">Darren B...</div>
<div class="t" style="left:726px;top:203px;font-size:14.7px;font-weight:bold;color:#2b2b2b;">User</div>
<div class="t" style="left:845px;top:203px;font-size:14.7px;font-weight:bold;color:#0000ee;text-decoration:underline">Keys, Lacy</div>
<div class="t" style="left:965px;top:203px;font-size:14.7px;font-weight:bold;color:#2b2b2b;letter-spacing:1.4px">05/04/2023</div>
<div class="r" style="left:51px;top:230px;width:16px;height:16px;background:#fff;border:1px solid #555;border-radius:3px;box-sizing:border-box"></div>
<div class="r" style="left:125px;top:237px;width:11px;height:3px;background:#808080"></div>
<div class="r" style="left:129px;top:233px;width:3px;height:11px;background:#808080"></div>
<div class="t" style="left:145px;top:231px;font-size:14.7px;font-weight:bold;color:#2b2b2b;letter-spacing:0.55px">Job (0/8)</div>
<svg class="r" style="left:218px;top:233px" width="17" height="9" viewBox="0 0 17 9" fill="none" stroke="#2f3335" stroke-width="1.3">
<path d="M7.3 1.5 H4.6 A3 3 0 0 0 4.6 7.5 H7.3 M9.3 1.5 H12.4 A3 3 0 0 1 12.4 7.5 H9.3 M5.6 4.5 H10.9"/></svg>
<div class="t" style="left:246px;top:231px;font-size:14.7px;font-weight:bold;color:#2b2b2b;">Tax return</div>
<div class="t" style="left:365px;top:231px;font-size:14.7px;font-weight:bold;color:#2b2b2b;">Tax Return</div>
<svg class="r" style="left:464px;top:233px" width="10" height="10" viewBox="0 0 10 10" fill="none" stroke="#484848" stroke-width="1.25">
<circle cx="5" cy="5" r="3.95"/><path d="M4.9 2.4 V5.1 L6.5 6.4" stroke-width="1.05"/></svg>
<div class="t" style="left:485px;top:231px;font-size:14.7px;font-weight:bold;color:#0000ee;text-decoration:underline">Tax Return (...</div>
<svg class="r" style="left:605px;top:228px" width="20" height="20" viewBox="0 0 20 20">
<defs><clipPath id="c8"><circle cx="10" cy="10" r="10"/></clipPath></defs>
<g clip-path="url(#c8)"><rect width="20" height="20" fill="#cfd2d0"/>
<ellipse cx="2.6" cy="11" rx="2.2" ry="2.8" fill="#34444f"/>
<ellipse cx="16.4" cy="8.8" rx="2.6" ry="3.2" fill="#8d9488"/>
<circle cx="18.7" cy="8.2" r="0.9" fill="#3a3a3a"/><circle cx="18.9" cy="11.6" r="0.8" fill="#444"/>
<path d="M1 20 L2.5 16 Q6 13.6 10 14 Q14.5 13.6 17.5 16 L20 20 Z" fill="#a9c1d6"/>
<path d="M6 16 L8 20 M13.5 15.5 L15 20" stroke="#86a3bd" stroke-width="0.7"/>
<ellipse cx="10" cy="9.3" rx="3.4" ry="4.7" fill="#dfc3ae"/>
<path d="M6.8 10.2 Q7.4 14.5 10 14.6 Q12.7 14.5 13.2 10.2 Q10 12.2 6.8 10.2 Z" fill="#a87556"/>
<path d="M6.8 7 Q7.2 4.1 10 4.2 Q12.8 4.1 13.2 7 Q10 5.5 6.8 7 Z" fill="#6a4a38"/>
<path d="M6.6 8.8 H13.4" stroke="#7a7a7a" stroke-width="0.45"/>
</g></svg>
<div class="t" style="left:630px;top:231px;font-size:14.7px;font-weight:bold;color:#2b2b2b;">Darren B...</div>
<div class="t" style="left:726px;top:231px;font-size:14.7px;font-weight:bold;color:#2b2b2b;">User</div>
<div class="t" style="left:845px;top:231px;font-size:14.7px;font-weight:bold;color:#0000ee;text-decoration:underline">Lawrence, E...</div>
<div class="t" style="left:965px;top:231px;font-size:14.7px;font-weight:bold;color:#2b2b2b;letter-spacing:1.4px">05/04/2023</div>
<div class="r" style="left:51px;top:258px;width:16px;height:16px;background:#fff;border:1px solid #555;border-radius:3px;box-sizing:border-box"></div>
<div class="r" style="left:125px;top:265px;width:11px;height:3px;background:#808080"></div>
<div class="r" style="left:129px;top:261px;width:3px;height:11px;background:#808080"></div>
<div class="t" style="left:145px;top:259px;font-size:14.7px;font-weight:bold;color:#2b2b2b;letter-spacing:0.55px">Job (0/8)</div>
<svg class="r" style="left:218px;top:261px" width="17" height="9" viewBox="0 0 17 9" fill="none" stroke="#2f3335" stroke-width="1.3">
<path d="M7.3 1.5 H4.6 A3 3 0 0 0 4.6 7.5 H7.3 M9.3 1.5 H12.4 A3 3 0 0 1 12.4 7.5 H9.3 M5.6 4.5 H10.9"/></svg>
<div class="t" style="left:246px;top:259px;font-size:14.7px;font-weight:bold;color:#2b2b2b;">Tax return</div>
<div class="t" style="left:365px;top:259px;font-size:14.7px;font-weight:bold;color:#2b2b2b;">Tax Return</div>
<div class="t" style="left:485px;top:259px;font-size:14.7px;font-weight:bold;color:#0000ee;text-decoration:underline">Tax Return (...</div>
<svg class="r" style="left:605px;top:256px" width="20" height="20" viewBox="0 0 20 20">
<defs><clipPath id="c9"><circle cx="10" cy="10" r="10"/></clipPath></defs>
<g clip-path="url(#c9)"><rect width="20" height="20" fill="#cfd2d0"/>
<ellipse cx="2.6" cy="11" rx="2.2" ry="2.8" fill="#34444f"/>
<ellipse cx="16.4" cy="8.8" rx="2.6" ry="3.2" fill="#8d9488"/>
<circle cx="18.7" cy="8.2" r="0.9" fill="#3a3a3a"/><circle cx="18.9" cy="11.6" r="0.8" fill="#444"/>
<path d="M1 20 L2.5 16 Q6 13.6 10 14 Q14.5 13.6 17.5 16 L20 20 Z" fill="#a9c1d6"/>
<path d="M6 16 L8 20 M13.5 15.5 L15 20" stroke="#86a3bd" stroke-width="0.7"/>
<ellipse cx="10" cy="9.3" rx="3.4" ry="4.7" fill="#dfc3ae"/>
<path d="M6.8 10.2 Q7.4 14.5 10 14.6 Q12.7 14.5 13.2 10.2 Q10 12.2 6.8 10.2 Z" fill="#a87556"/>
<path d="M6.8 7 Q7.2 4.1 10 4.2 Q12.8 4.1 13.2 7 Q10 5.5 6.8 7 Z" fill="#6a4a38"/>
<path d="M6.6 8.8 H13.4" stroke="#7a7a7a" stroke-width="0.45"/>
</g></svg>
<div class="t" style="left:630px;top:259px;font-size:14.7px;font-weight:bold;color:#2b2b2b;">Darren B...</div>
<div class="t" style="left:726px;top:259px;font-size:14.7px;font-weight:bold;color:#2b2b2b;">User</div>
<div class="t" style="left:845px;top:259px;font-size:14.7px;font-weight:bold;color:#0000ee;text-decoration:underline">Jones, Boris</div>
<div class="t" style="left:965px;top:259px;font-size:14.7px;font-weight:bold;color:#2b2b2b;letter-spacing:1.4px">05/04/2023</div>
<div class="r" style="left:51px;top:286px;width:16px;height:16px;background:#fff;border:1px solid #555;border-radius:3px;box-sizing:border-box"></div>
<div class="r" style="left:125px;top:293px;width:11px;height:3px;background:#808080"></div>
<div class="r" style="left:129px;top:289px;width:3px;height:11px;background:#808080"></div>
<div class="t" style="left:145px;top:287px;font-size:14.7px;font-weight:bold;color:#2b2b2b;letter-spacing:0.55px">Job (0/8)</div>
<svg class="r" style="left:218px;top:289px" width="17" height="9" viewBox="0 0 17 9" fill="none" stroke="#2f3335" stroke-width="1.3">
<path d="M7.3 1.5 H4.6 A3 3 0 0 0 4.6 7.5 H7.3 M9.3 1.5 H12.4 A3 3 0 0 1 12.4 7.5 H9.3 M5.6 4.5 H10.9"/></svg>
<div class="t" style="left:246px;top:287px;font-size:14.7px;font-weight:bold;color:#2b2b2b;">Tax return</div>
<div class="t" style="left:365px;top:287px;font-size:14.7px;font-weight:bold;color:#2b2b2b;">Tax Return</div>
<div class="t" style="left:485px;top:287px;font-size:14.7px;font-weight:bold;color:#0000ee;text-decoration:underline">Tax Return (...</div>
<svg class="r" style="left:605px;top:284px" width="20" height="20" viewBox="0 0 20 20">
<defs><clipPath id="c10"><circle cx="10" cy="10" r="10"/></clipPath></defs>
<g clip-path="url(#c10)"><rect width="20" height="20" fill="#cfd2d0"/>
<ellipse cx="2.6" cy="11" rx="2.2" ry="2.8" fill="#34444f"/>
<ellipse cx="16.4" cy="8.8" rx="2.6" ry="3.2" fill="#8d9488"/>
<circle cx="18.7" cy="8.2" r="0.9" fill="#3a3a3a"/><circle cx="18.9" cy="11.6" r="0.8" fill="#444"/>
<path d="M1 20 L2.5 16 Q6 13.6 10 14 Q14.5 13.6 17.5 16 L20 20 Z" fill="#a9c1d6"/>
<path d="M6 16 L8 20 M13.5 15.5 L15 20" stroke="#86a3bd" stroke-width="0.7"/>
<ellipse cx="10" cy="9.3" rx="3.4" ry="4.7" fill="#dfc3ae"/>
<path d="M6.8 10.2 Q7.4 14.5 10 14.6 Q12.7 14.5 13.2 10.2 Q10 12.2 6.8 10.2 Z" fill="#a87556"/>
<path d="M6.8 7 Q7.2 4.1 10 4.2 Q12.8 4.1 13.2 7 Q10 5.5 6.8 7 Z" fill="#6a4a38"/>
<path d="M6.6 8.8 H13.4" stroke="#7a7a7a" stroke-width="0.45"/>
</g></svg>
<div class="t" style="left:630px;top:287px;font-size:14.7px;font-weight:bold;color:#2b2b2b;">Darren B...</div>
<div class="t" style="left:726px;top:287px;font-size:14.7px;font-weight:bold;color:#2b2b2b;">User</div>
<div class="t" style="left:845px;top:287px;font-size:14.7px;font-weight:bold;color:#0000ee;text-decoration:underline">Smith, Abel</div>
<div class="t" style="left:965px;top:287px;font-size:14.7px;font-weight:bold;color:#2b2b2b;letter-spacing:1.4px">05/04/2023</div>
<div class="r" style="left:51px;top:314px;width:16px;height:16px;background:#fff;border:1px solid #555;border-radius:3px;box-sizing:border-box"></div>
<div class="r" style="left:125px;top:321px;width:11px;height:3px;background:#808080"></div>
<div class="r" style="left:129px;top:317px;width:3px;height:11px;background:#808080"></div>
<div class="t" style="left:145px;top:315px;font-size:14.7px;font-weight:bold;color:#2b2b2b;letter-spacing:0.55px">Job (0/8)</div>
<svg class="r" style="left:218px;top:317px" width="17" height="9" viewBox="0 0 17 9" fill="none" stroke="#2f3335" stroke-width="1.3">
<path d="M7.3 1.5 H4.6 A3 3 0 0 0 4.6 7.5 H7.3 M9.3 1.5 H12.4 A3 3 0 0 1 12.4 7.5 H9.3 M5.6 4.5 H10.9"/></svg>
<div class="t" style="left:365px;top:315px;font-size:14.7px;font-weight:bold;color:#2b2b2b;">Tax Return</div>
<svg class="r" style="left:464px;top:317px" width="10" height="10" viewBox="0 0 10 10" fill="none" stroke="#484848" stroke-width="1.25">
<circle cx="5" cy="5" r="3.95"/><path d="M4.9 2.4 V5.1 L6.5 6.4" stroke-width="1.05"/></svg>
<div class="t" style="left:485px;top:315px;font-size:14.7px;font-weight:bold;color:#0000ee;text-decoration:underline">Tax Return</div>
<div class="t" style="left:605px;top:315px;font-size:14.7px;font-weight:bold;color:#2b2b2b;">Tax Team</div>
<div class="t" style="left:726px;top:315px;font-size:14.7px;font-weight:bold;color:#2b2b2b;">Team</div>
<div class="t" style="left:845px;top:315px;font-size:14.7px;font-weight:bold;color:#0000ee;text-decoration:underline">Edgell, Edw...</div>
<div class="t" style="left:965px;top:315px;font-size:14.7px;font-weight:bold;color:#2b2b2b;letter-spacing:1.4px">05/04/2023</div>
<div class="r" style="left:51px;top:342px;width:16px;height:16px;background:#fff;border:1px solid #555;border-radius:3px;box-sizing:border-box"></div>
<div class="r" style="left:125px;top:349px;width:11px;height:3px;background:#808080"></div>
<div class="r" style="left:129px;top:345px;width:3px;height:11px;background:#808080"></div>
<div class="t" style="left:145px;top:343px;font-size:14.7px;font-weight:bold;color:#2b2b2b;letter-spacing:0.55px">Job (0/8)</div>
<svg class="r" style="left:218px;top:345px" width="17" height="9" viewBox="0 0 17 9" fill="none" stroke="#2f3335" stroke-width="1.3">
<path d="M7.3 1.5 H4.6 A3 3 0 0 0 4.6 7.5 H7.3 M9.3 1.5 H12.4 A3 3 0 0 1 12.4 7.5 H9.3 M5.6 4.5 H10.9"/></svg>
<div class="t" style="left:365px;top:343px;font-size:14.7px;font-weight:bold;color:#2b2b2b;">Tax Return</div>
<svg class="r" style="left:464px;top:345px" width="10" height="10" viewBox="0 0 10 10" fill="none" stroke="#484848" stroke-width="1.25">
<circle cx="5" cy="5" r="3.95"/><path d="M4.9 2.4 V5.1 L6.5 6.4" stroke-width="1.05"/></svg>
<div class="t" style="left:485px;top:343px;font-size:14.7px;font-weight:bold;color:#0000ee;text-decoration:underline">Tax Return</div>
<div class="t" style="left:605px;top:343px;font-size:14.7px;font-weight:bold;color:#2b2b2b;">Tax Team</div>
<div class="t" style="left:726px;top:343px;font-size:14.7px;font-weight:bold;color:#2b2b2b;">Team</div>
<div class="t" style="left:845px;top:343px;font-size:14.7px;font-weight:bold;color:#0000ee;text-decoration:underline">Forrest, Frank</div>
<div class="t" style="left:965px;top:343px;font-size:14.7px;font-weight:bold;color:#2b2b2b;letter-spacing:1.4px">05/04/2023</div>
<div class="r" style="left:51px;top:370px;width:16px;height:16px;background:#fff;border:1px solid #555;border-radius:3px;box-sizing:border-box"></div>
<div class="r" style="left:125px;top:377px;width:11px;height:3px;background:#808080"></div>
<div class="r" style="left:129px;top:373px;width:3px;height:11px;background:#808080"></div>
<div class="t" style="left:145px;top:371px;font-size:14.7px;font-weight:bold;color:#2b2b2b;letter-spacing:0.55px">Job (0/8)</div>
<svg class="r" style="left:218px;top:373px" width="17" height="9" viewBox="0 0 17 9" fill="none" stroke="#2f3335" stroke-width="1.3">
<path d="M7.3 1.5 H4.6 A3 3 0 0 0 4.6 7.5 H7.3 M9.3 1.5 H12.4 A3 3 0 0 1 12.4 7.5 H9.3 M5.6 4.5 H10.9"/></svg>
<div class="t" style="left:365px;top:371px;font-size:14.7px;font-weight:bold;color:#2b2b2b;">Tax Return</div>
<svg class="r" style="left:464px;top:373px" width="10" height="10" viewBox="0 0 10 10" fill="none" stroke="#484848" stroke-width="1.25">
<circle cx="5" cy="5" r="3.95"/><path d="M4.9 2.4 V5.1 L6.5 6.4" stroke-width="1.05"/></svg>
<div class="t" style="left:485px;top:371px;font-size:14.7px;font-weight:bold;color:#0000ee;text-decoration:underline">Tax Return</div>
<div class="t" style="left:605px;top:371px;font-size:14.7px;font-weight:bold;color:#2b2b2b;">Tax Team</div>
<div class="t" style="left:726px;top:371px;font-size:14.7px;font-weight:bold;color:#2b2b2b;">Team</div>
<div class="t" style="left:845px;top:371px;font-size:14.7px;font-weight:bold;color:#0000ee;text-decoration:underline">Gardener, G...</div>
<div class="t" style="left:965px;top:371px;font-size:14.7px;font-weight:bold;color:#2b2b2b;letter-spacing:1.4px">05/04/2023</div>
<div class="r" style="left:51px;top:398px;width:16px;height:16px;background:#fff;border:1px solid #555;border-radius:3px;box-sizing:border-box"></div>
<div class="r" style="left:125px;top:405px;width:11px;height:3px;background:#808080"></div>
<div class="r" style="left:129px;top:401px;width:3px;height:11px;background:#808080"></div>
<div class="t" style="left:145px;top:399px;font-size:14.7px;font-weight:bold;color:#2b2b2b;letter-spacing:0.55px">Job (0/8)</div>
<svg class="r" style="left:218px;top:401px" width="17" height="9" viewBox="0 0 17 9" fill="none" stroke="#2f3335" stroke-width="1.3">
<path d="M7.3 1.5 H4.6 A3 3 0 0 0 4.6 7.5 H7.3 M9.3 1.5 H12.4 A3 3 0 0 1 12.4 7.5 H9.3 M5.6 4.5 H10.9"/></svg>
<div class="t" style="left:365px;top:399px;font-size:14.7px;font-weight:bold;color:#2b2b2b;">Tax Return</div>
<div class="t" style="left:485px;top:399px;font-size:14.7px;font-weight:bold;color:#0000ee;text-decoration:underline">Tax Return</div>
<div class="t" style="left:605px;top:399px;font-size:14.7px;font-weight:bold;color:#2b2b2b;">Tax Team</div>
<div class="t" style="left:726px;top:399px;font-size:14.7px;font-weight:bold;color:#2b2b2b;">Team</div>
<div class="t" style="left:845px;top:399px;font-size:14.7px;font-weight:bold;color:#0000ee;text-decoration:underline">Hendon, Ha...</div>
<div class="t" style="left:965px;top:399px;font-size:14.7px;font-weight:bold;color:#2b2b2b;letter-spacing:1.4px">05/04/2023</div>
<div class="r" style="left:51px;top:426px;width:16px;height:16px;background:#fff;border:1px solid #555;border-radius:3px;box-sizing:border-box"></div>
<div class="r" style="left:125px;top:433px;width:11px;height:3px;background:#808080"></div>
<div class="r" style="left:129px;top:429px;width:3px;height:11px;background:#808080"></div>
<div class="t" style="left:145px;top:427px;font-size:14.7px;font-weight:bold;color:#2b2b2b;letter-spacing:0.55px">Job (0/8)</div>
<svg class="r" style="left:218px;top:429px" width="17" height="9" viewBox="0 0 17 9" fill="none" stroke="#2f3335" stroke-width="1.3">
<path d="M7.3 1.5 H4.6 A3 3 0 0 0 4.6 7.5 H7.3 M9.3 1.5 H12.4 A3 3 0 0 1 12.4 7.5 H9.3 M5.6 4.5 H10.9"/></svg>
<div class="t" style="left:365px;top:427px;font-size:14.7px;font-weight:bold;color:#2b2b2b;">Tax Return</div>
<div class="t" style="left:485px;top:427px;font-size:14.7px;font-weight:bold;color:#0000ee;text-decoration:underline">Tax Return</div>
<div class="t" style="left:605px;top:427px;font-size:14.7px;font-weight:bold;color:#2b2b2b;">Tax Team</div>
<div class="t" style="left:726px;top:427px;font-size:14.7px;font-weight:bold;color:#2b2b2b;">Team</div>
<div class="t" style="left:845px;top:427px;font-size:14.7px;font-weight:bold;color:#0000ee;text-decoration:underline">Ingram, Ian</div>
<div class="t" style="left:965px;top:427px;font-size:14.7px;font-weight:bold;color:#2b2b2b;letter-spacing:1.4px">05/04/2023</div>
<div class="r" style="left:51px;top:454px;width:16px;height:16px;background:#fff;border:1px solid #555;border-radius:3px;box-sizing:border-box"></div>
<div class="r" style="left:125px;top:461px;width:11px;height:3px;background:#808080"></div>
<div class="r" style="left:129px;top:457px;width:3px;height:11px;background:#808080"></div>
<div class="t" style="left:145px;top:455px;font-size:14.7px;font-weight:bold;color:#2b2b2b;letter-spacing:0.55px">Job (0/8)</div>
<svg class="r" style="left:218px;top:457px" width="17" height="9" viewBox="0 0 17 9" fill="none" stroke="#2f3335" stroke-width="1.3">
<path d="M7.3 1.5 H4.6 A3 3 0 0 0 4.6 7.5 H7.3 M9.3 1.5 H12.4 A3 3 0 0 1 12.4 7.5 H9.3 M5.6 4.5 H10.9"/></svg>
<div class="t" style="left:365px;top:455px;font-size:14.7px;font-weight:bold;color:#2b2b2b;">Tax Return</div>
<svg class="r" style="left:464px;top:457px" width="10" height="10" viewBox="0 0 10 10" fill="none" stroke="#484848" stroke-width="1.25">
<circle cx="5" cy="5" r="3.95"/><path d="M4.9 2.4 V5.1 L6.5 6.4" stroke-width="1.05"/></svg>
<div class="t" style="left:485px;top:455px;font-size:14.7px;font-weight:bold;color:#0000ee;text-decoration:underline">Tax Return</div>
<div class="t" style="left:605px;top:455px;font-size:14.7px;font-weight:bold;color:#2b2b2b;">Tax Team</div>
<div class="t" style="left:726px;top:455px;font-size:14.7px;font-weight:bold;color:#2b2b2b;">Team</div>
<div class="t" style="left:845px;top:455px;font-size:14.7px;font-weight:bold;color:#0000ee;text-decoration:underline">Jennett, Ja...</div>
<div class="t" style="left:965px;top:455px;font-size:14.7px;font-weight:bold;color:#2b2b2b;letter-spacing:1.4px">05/04/2023</div>
<div class="r" style="left:51px;top:482px;width:16px;height:16px;background:#fff;border:1px solid #555;border-radius:3px;box-sizing:border-box"></div>
<div class="r" style="left:125px;top:489px;width:11px;height:3px;background:#808080"></div>
<div class="r" style="left:129px;top:485px;width:3px;height:11px;background:#808080"></div>
<div class="t" style="left:145px;top:483px;font-size:14.7px;font-weight:bold;color:#2b2b2b;letter-spacing:0.55px">Job (0/8)</div>
<svg class="r" style="left:218px;top:485px" width="17" height="9" viewBox="0 0 17 9" fill="none" stroke="#2f3335" stroke-width="1.3">
<path d="M7.3 1.5 H4.6 A3 3 0 0 0 4.6 7.5 H7.3 M9.3 1.5 H12.4 A3 3 0 0 1 12.4 7.5 H9.3 M5.6 4.5 H10.9"/></svg>
<div class="t" style="left:365px;top:483px;font-size:14.7px;font-weight:bold;color:#2b2b2b;">Tax Return</div>
<div class="t" style="left:485px;top:483px;font-size:14.7px;font-weight:bold;color:#0000ee;text-decoration:underline">Tax Return</div>
<div class="t" style="left:605px;top:483px;font-size:14.7px;font-weight:bold;color:#2b2b2b;">Tax Team</div>
<div class="t" style="left:726px;top:483px;font-size:14.7px;font-weight:bold;color:#2b2b2b;">Team</div>
<div class="t" style="left:845px;top:483px;font-size:14.7px;font-weight:bold;color:#0000ee;text-decoration:underline">Knockton, K...</div>
<div class="t" style="left:965px;top:483px;font-size:14.7px;font-weight:bold;color:#2b2b2b;letter-spacing:1.4px">05/04/2023</div>
<div class="r" style="left:51px;top:510px;width:16px;height:16px;background:#fff;border:1px solid #555;border-radius:3px;box-sizing:border-box"></div>
<div class="r" style="left:125px;top:517px;width:11px;height:3px;background:#808080"></div>
<div class="r" style="left:129px;top:513px;width:3px;height:11px;background:#808080"></div>
<div class="t" style="left:145px;top:511px;font-size:14.7px;font-weight:bold;color:#2b2b2b;letter-spacing:0.55px">Job (0/8)</div>
<svg class="r" style="left:218px;top:513px" width="17" height="9" viewBox="0 0 17 9" fill="none" stroke="#2f3335" stroke-width="1.3">
<path d="M7.3 1.5 H4.6 A3 3 0 0 0 4.6 7.5 H7.3 M9.3 1.5 H12.4 A3 3 0 0 1 12.4 7.5 H9.3 M5.6 4.5 H10.9"/></svg>
<div class="t" style="left:365px;top:511px;font-size:14.7px;font-weight:bold;color:#2b2b2b;">Tax Return</div>
<div class="t" style="left:485px;top:511px;font-size:14.7px;font-weight:bold;color:#0000ee;text-decoration:underline">Tax Return</div>
<div class="t" style="left:605px;top:511px;font-size:14.7px;font-weight:bold;color:#2b2b2b;">Tax Team</div>
<div class="t" style="left:726px;top:511px;font-size:14.7px;font-weight:bold;color:#2b2b2b;">Team</div>
<div class="t" style="left:845px;top:511px;font-size:14.7px;font-weight:bold;color:#0000ee;text-decoration:underline">Letterman, ...</div>
<div class="t" style="left:965px;top:511px;font-size:14.7px;font-weight:bold;color:#2b2b2b;letter-spacing:1.4px">05/04/2023</div>
<div class="r" style="left:51px;top:538px;width:16px;height:16px;background:#fff;border:1px solid #555;border-radius:3px;box-sizing:border-box"></div>
<div class="r" style="left:125px;top:545px;width:11px;height:3px;background:#808080"></div>
<div class="r" style="left:129px;top:541px;width:3px;height:11px;background:#808080"></div>
<div class="t" style="left:145px;top:539px;font-size:14.7px;font-weight:bold;color:#2b2b2b;letter-spacing:0.55px">Job (0/8)</div>
<svg class="r" style="left:218px;top:541px" width="17" height="9" viewBox="0 0 17 9" fill="none" stroke="#2f3335" stroke-width="1.3">
<path d="M7.3 1.5 H4.6 A3 3 0 0 0 4.6 7.5 H7.3 M9.3 1.5 H12.4 A3 3 0 0 1 12.4 7.5 H9.3 M5.6 4.5 H10.9"/></svg>
<div class="t" style="left:365px;top:539px;font-size:14.7px;font-weight:bold;color:#2b2b2b;">Tax Return</div>
<svg class="r" style="left:464px;top:541px" width="10" height="10" viewBox="0 0 10 10" fill="none" stroke="#484848" stroke-width="1.25">
<circle cx="5" cy="5" r="3.95"/><path d="M4.9 2.4 V5.1 L6.5 6.4" stroke-width="1.05"/></svg>
<div class="t" style="left:485px;top:539px;font-size:14.7px;font-weight:bold;color:#0000ee;text-decoration:underline">Tax Return</div>
<div class="t" style="left:605px;top:539px;font-size:14.7px;font-weight:bold;color:#2b2b2b;">Tax Team</div>
<div class="t" style="left:726px;top:539px;font-size:14.7px;font-weight:bold;color:#2b2b2b;">Team</div>
<div class="t" style="left:845px;top:539px;font-size:14.7px;font-weight:bold;color:#0000ee;text-decoration:underline">Mannering, ...</div>
<div class="t" style="left:965px;top:539px;font-size:14.7px;font-weight:bold;color:#2b2b2b;letter-spacing:1.4px">05/04/2023</div>
<div class="r" style="left:51px;top:566px;width:16px;height:16px;background:#fff;border:1px solid #555;border-radius:3px;box-sizing:border-box"></div>
<div class="r" style="left:125px;top:573px;width:11px;height:3px;background:#808080"></div>
<div class="r" style="left:129px;top:569px;width:3px;height:11px;background:#808080"></div>
<div class="t" style="left:145px;top:567px;font-size:14.7px;font-weight:bold;color:#2b2b2b;letter-spacing:0.55px">Job (0/8)</div>
<svg class="r" style="left:218px;top:569px" width="17" height="9" viewBox="0 0 17 9" fill="none" stroke="#2f3335" stroke-width="1.3">
<path d="M7.3 1.5 H4.6 A3 3 0 0 0 4.6 7.5 H7.3 M9.3 1.5 H12.4 A3 3 0 0 1 12.4 7.5 H9.3 M5.6 4.5 H10.9"/></svg>
<div class="t" style="left:365px;top:567px;font-size:14.7px;font-weight:bold;color:#2b2b2b;">Tax Return</div>
<div class="t" style="left:485px;top:567px;font-size:14.7px;font-weight:bold;color:#0000ee;text-decoration:underline">Tax Return</div>
<div class="t" style="left:605px;top:567px;font-size:14.7px;font-weight:bold;color:#2b2b2b;">Tax Team</div>
<div class="t" style="left:726px;top:567px;font-size:14.7px;font-weight:bold;color:#2b2b2b;">Team</div>
<div class="t" style="left:845px;top:567px;font-size:14.7px;font-weight:bold;color:#0000ee;text-decoration:underline">Nettle, Neil</div>
<div class="t" style="left:965px;top:567px;font-size:14.7px;font-weight:bold;color:#2b2b2b;letter-spacing:1.4px">05/04/2023</div>
<div class="r" style="left:51px;top:594px;width:16px;height:16px;background:#fff;border:1px solid #555;border-radius:3px;box-sizing:border-box"></div>
<div class="r" style="left:125px;top:601px;width:11px;height:3px;background:#808080"></div>
<div class="r" style="left:129px;top:597px;width:3px;height:11px;background:#808080"></div>
<div class="t" style="left:145px;top:595px;font-size:14.7px;font-weight:bold;color:#2b2b2b;letter-spacing:0.55px">Job (0/8)</div>
<svg class="r" style="left:218px;top:597px" width="17" height="9" viewBox="0 0 17 9" fill="none" stroke="#2f3335" stroke-width="1.3">
<path d="M7.3 1.5 H4.6 A3 3 0 0 0 4.6 7.5 H7.3 M9.3 1.5 H12.4 A3 3 0 0 1 12.4 7.5 H9.3 M5.6 4.5 H10.9"/></svg>
<div class="t" style="left:365px;top:595px;font-size:14.7px;font-weight:bold;color:#2b2b2b;">Tax Return</div>
<svg class="r" style="left:464px;top:597px" width="10" height="10" viewBox="0 0 10 10" fill="none" stroke="#484848" stroke-width="1.25">
<circle cx="5" cy="5" r="3.95"/><path d="M4.9 2.4 V5.1 L6.5 6.4" stroke-width="1.05"/></svg>
<div class="t" style="left:485px;top:595px;font-size:14.7px;font-weight:bold;color:#0000ee;text-decoration:underline">Tax Return</div>
<div class="t" style="left:605px;top:595px;font-size:14.7px;font-weight:bold;color:#2b2b2b;">Tax Team</div>
<div class="t" style="left:726px;top:595px;font-size:14.7px;font-weight:bold;color:#2b2b2b;">Team</div>
<div class="t" style="left:845px;top:595px;font-size:14.7px;font-weight:bold;color:#0000ee;text-decoration:underline">Abraham Pa...</div>
<div class="t" style="left:965px;top:595px;font-size:14.7px;font-weight:bold;color:#2b2b2b;letter-spacing:1.4px">05/04/2023</div>
<div class="r" style="left:51px;top:622px;width:16px;height:16px;background:#fff;border:1px solid #555;border-radius:3px;box-sizing:border-box"></div>
<div class="r" style="left:125px;top:629px;width:11px;height:3px;background:#808080"></div>
<div class="r" style="left:129px;top:625px;width:3px;height:11px;background:#808080"></div>
<div class="t" style="left:145px;top:623px;font-size:14.7px;font-weight:bold;color:#2b2b2b;letter-spacing:0.55px">Job (0/8)</div>
<svg class="r" style="left:218px;top:625px" width="17" height="9" viewBox="0 0 17 9" fill="none" stroke="#2f3335" stroke-width="1.3">
<path d="M7.3 1.5 H4.6 A3 3 0 0 0 4.6 7.5 H7.3 M9.3 1.5 H12.4 A3 3 0 0 1 12.4 7.5 H9.3 M5.6 4.5 H10.9"/></svg>
<div class="t" style="left:365px;top:623px;font-size:14.7px;font-weight:bold;color:#2b2b2b;">Tax Return</div>
<svg class="r" style="left:464px;top:625px" width="10" height="10" viewBox="0 0 10 10" fill="none" stroke="#484848" stroke-width="1.25">
<circle cx="5" cy="5" r="3.95"/><path d="M4.9 2.4 V5.1 L6.5 6.4" stroke-width="1.05"/></svg>
<div class="t" style="left:485px;top:623px;font-size:14.7px;font-weight:bold;color:#0000ee;text-decoration:underline">Tax Return</div>
<div class="t" style="left:605px;top:623px;font-size:14.7px;font-weight:bold;color:#2b2b2b;">Tax Team</div>
<div class="t" style="left:726px;top:623px;font-size:14.7px;font-weight:bold;color:#2b2b2b;">Team</div>
<div class="t" style="left:845px;top:623px;font-size:14.7px;font-weight:bold;color:#0000ee;text-decoration:underline">Otterman, ...</div>
<div class="t" style="left:965px;top:623px;font-size:14.7px;font-weight:bold;color:#2b2b2b;letter-spacing:1.4px">05/04/2023</div>
<div class="r" style="left:51px;top:650px;width:16px;height:16px;background:#fff;border:1px solid #555;border-radius:3px;box-sizing:border-box"></div>
<div class="r" style="left:125px;top:657px;width:11px;height:3px;background:#808080"></div>
<div class="r" style="left:129px;top:653px;width:3px;height:11px;background:#808080"></div>
<div class="t" style="left:145px;top:651px;font-size:14.7px;font-weight:bold;color:#2b2b2b;letter-spacing:0.55px">Job (0/8)</div>
<svg class="r" style="left:218px;top:653px" width="17" height="9" viewBox="0 0 17 9" fill="none" stroke="#2f3335" stroke-width="1.3">
<path d="M7.3 1.5 H4.6 A3 3 0 0 0 4.6 7.5 H7.3 M9.3 1.5 H12.4 A3 3 0 0 1 12.4 7.5 H9.3 M5.6 4.5 H10.9"/></svg>
<div class="t" style="left:365px;top:651px;font-size:14.7px;font-weight:bold;color:#2b2b2b;">Tax Return</div>
<svg class="r" style="left:464px;top:653px" width="10" height="10" viewBox="0 0 10 10" fill="none" stroke="#484848" stroke-width="1.25">
<circle cx="5" cy="5" r="3.95"/><path d="M4.9 2.4 V5.1 L6.5 6.4" stroke-width="1.05"/></svg>
<div class="t" style="left:485px;top:651px;font-size:14.7px;font-weight:bold;color:#0000ee;text-decoration:underline">Tax Return</div>
<div class="t" style="left:605px;top:651px;font-size:14.7px;font-weight:bold;color:#2b2b2b;">Tax Team</div>
<div class="t" style="left:726px;top:651px;font-size:14.7px;font-weight:bold;color:#2b2b2b;">Team</div>
<div class="t" style="left:845px;top:651px;font-size:14.7px;font-weight:bold;color:#0000ee;text-decoration:underline">Aberdeen Tr...</div>
<div class="t" style="left:965px;top:651px;font-size:14.7px;font-weight:bold;color:#2b2b2b;letter-spacing:1.4px">05/04/2023</div>
<div class="r" style="left:51px;top:678px;width:16px;height:16px;background:#fff;border:1px solid #555;border-radius:3px;box-sizing:border-box"></div>
<div class="r" style="left:125px;top:685px;width:11px;height:3px;background:#808080"></div>
<div class="r" style="left:129px;top:681px;width:3px;height:11px;background:#808080"></div>
<div class="t" style="left:145px;top:679px;font-size:14.7px;font-weight:bold;color:#2b2b2b;letter-spacing:0.55px">Job (0/8)</div>
<svg class="r" style="left:218px;top:681px" width="17" height="9" viewBox="0 0 17 9" fill="none" stroke="#2f3335" stroke-width="1.3">
<path d="M7.3 1.5 H4.6 A3 3 0 0 0 4.6 7.5 H7.3 M9.3 1.5 H12.4 A3 3 0 0 1 12.4 7.5 H9.3 M5.6 4.5 H10.9"/></svg>
<div class="t" style="left:365px;top:679px;font-size:14.7px;font-weight:bold;color:#2b2b2b;">Tax Return</div>
<svg class="r" style="left:464px;top:681px" width="10" height="10" viewBox="0 0 10 10" fill="none" stroke="#484848" stroke-width="1.25">
<circle cx="5" cy="5" r="3.95"/><path d="M4.9 2.4 V5.1 L6.5 6.4" stroke-width="1.05"/></svg>
<div class="t" style="left:485px;top:679px;font-size:14.7px;font-weight:bold;color:#0000ee;text-decoration:underline">Tax Return</div>
<div class="t" style="left:605px;top:679px;font-size:14.7px;font-weight:bold;color:#2b2b2b;">Tax Team</div>
<div class="t" style="left:726px;top:679px;font-size:14.7px;font-weight:bold;color:#2b2b2b;">Team</div>
<div class="t" style="left:845px;top:679px;font-size:14.7px;font-weight:bold;color:#0000ee;text-decoration:underline">Bearwood E...</div>
<div class="t" style="left:965px;top:679px;font-size:14.7px;font-weight:bold;color:#2b2b2b;letter-spacing:1.4px">05/04/2023</div>
<div class="r" style="left:51px;top:706px;width:16px;height:16px;background:#fff;border:1px solid #555;border-radius:3px;box-sizing:border-box"></div>
<div class="r" style="left:125px;top:713px;width:11px;height:3px;background:#808080"></div>
<div class="r" style="left:129px;top:709px;width:3px;height:11px;background:#808080"></div>
<div class="t" style="left:145px;top:707px;font-size:14.7px;font-weight:bold;color:#2b2b2b;letter-spacing:0.55px">Job (0/8)</div>
<svg class="r" style="left:218px;top:709px" width="17" height="9" viewBox="0 0 17 9" fill="none" stroke="#2f3335" stroke-width="1.3">
<path d="M7.3 1.5 H4.6 A3 3 0 0 0 4.6 7.5 H7.3 M9.3 1.5 H12.4 A3 3 0 0 1 12.4 7.5 H9.3 M5.6 4.5 H10.9"/></svg>
<div class="t" style="left:365px;top:707px;font-size:14.7px;font-weight:bold;color:#2b2b2b;">Tax Return</div>
<svg class="r" style="left:464px;top:709px" width="10" height="10" viewBox="0 0 10 10" fill="none" stroke="#484848" stroke-width="1.25">
<circle cx="5" cy="5" r="3.95"/><path d="M4.9 2.4 V5.1 L6.5 6.4" stroke-width="1.05"/></svg>
<div class="t" style="left:485px;top:707px;font-size:14.7px;font-weight:bold;color:#0000ee;text-decoration:underline">Tax Return</div>
<div class="t" style="left:605px;top:707px;font-size:14.7px;font-weight:bold;color:#2b2b2b;">Tax Team</div>
<div class="t" style="left:726px;top:707px;font-size:14.7px;font-weight:bold;color:#2b2b2b;">Team</div>
<div class="t" style="left:845px;top:707px;font-size:14.7px;font-weight:bold;color:#0000ee;text-decoration:underline">Pemberton, ...</div>
<div class="t" style="left:965px;top:707px;font-size:14.7px;font-weight:bold;color:#2b2b2b;letter-spacing:1.4px">05/04/2023</div>
<div class="r" style="left:51px;top:734px;width:16px;height:16px;background:#fff;border:1px solid #555;border-radius:3px;box-sizing:border-box"></div>
<div class="r" style="left:125px;top:741px;width:11px;height:3px;background:#808080"></div>
<div class="r" style="left:129px;top:737px;width:3px;height:11px;background:#808080"></div>
<div class="t" style="left:145px;top:735px;font-size:14.7px;font-weight:bold;color:#2b2b2b;letter-spacing:0.55px">Job (0/8)</div>
<svg class="r" style="left:218px;top:737px" width="17" height="9" viewBox="0 0 17 9" fill="none" stroke="#2f3335" stroke-width="1.3">
<path d="M7.3 1.5 H4.6 A3 3 0 0 0 4.6 7.5 H7.3 M9.3 1.5 H12.4 A3 3 0 0 1 12.4 7.5 H9.3 M5.6 4.5 H10.9"/></svg>
<div class="t" style="left:365px;top:735px;font-size:14.7px;font-weight:bold;color:#2b2b2b;">Tax Return</div>
<div class="t" style="left:485px;top:735px;font-size:14.7px;font-weight:bold;color:#0000ee;text-decoration:underline">Tax Return</div>
<div class="t" style="left:605px;top:735px;font-size:14.7px;font-weight:bold;color:#2b2b2b;">Tax Team</div>
<div class="t" style="left:726px;top:735px;font-size:14.7px;font-weight:bold;color:#2b2b2b;">Team</div>
<div class="t" style="left:845px;top:735px;font-size:14.7px;font-weight:bold;color:#0000ee;text-decoration:underline">Fields, Colin</div>
<div class="t" style="left:965px;top:735px;font-size:14.7px;font-weight:bold;color:#2b2b2b;letter-spacing:1.4px">05/04/2023</div>
</div>
</body></html>
